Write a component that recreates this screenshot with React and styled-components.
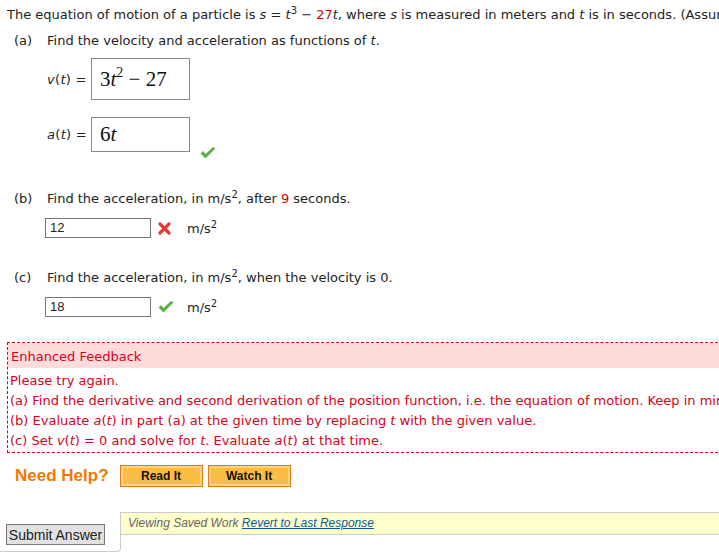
import styled, { createGlobalStyle } from "styled-components";

const Global = createGlobalStyle`
  html, body { margin: 0; padding: 0; background: #fff; }
  body { font-family: "DejaVu Sans", Verdana, sans-serif; font-size: 13px; color: #222; overflow: hidden; }
`;

const Page = styled.div`
  width: 719px;
  height: 554px;
  overflow: hidden;
  padding: 0 0 0 7px;
  box-sizing: border-box;
`;

const Intro = styled.div`
  white-space: nowrap;
  line-height: 16px;
  padding-top: 7px;
`;

const V = styled.i`
  font-style: italic;
`;

const Red = styled.span`
  color: #d50000;
`;

const Sup = styled.sup`
  font-size: 10px;
  line-height: 0;
  vertical-align: 5px;
`;

const Part = styled.div`
  margin-top: ${(p) => p.$top || 0}px;
  padding-left: 7px;
  display: flex;
  white-space: nowrap;
  line-height: 16px;
`;

const Letter = styled.span`
  width: 33px;
`;

const Body = styled.div`
  padding-left: 40px;
`;

const MathRow = styled.div`
  display: flex;
  align-items: center;
  margin-top: ${(p) => p.$top}px;
`;

const MathLabel = styled.span`
  width: 44px;
  flex-shrink: 0;
  white-space: nowrap;
  letter-spacing: 0.3px;
  color: #222;
`;

const MathBox = styled.div`
  width: 99px;
  height: ${(p) => p.$h}px;
  border: 1px solid #888;
  box-sizing: border-box;
  display: flex;
  align-items: center;
  padding-left: 8px;
  font-family: "Liberation Serif", "Times New Roman", serif;
  font-size: 21px;
  color: #111;
`;

const Sup2 = styled.sup`
  font-size: 14px;
  line-height: 0;
  vertical-align: 9px;
`;

const AnsRow = styled.div`
  display: flex;
  align-items: center;
  margin-top: ${(p) => p.$top}px;
  padding-left: 38px;
`;

const Input = styled.div`
  width: 106px;
  height: 20px;
  border: 1px solid #767676;
  box-sizing: border-box;
  font-family: "Liberation Sans", Arial, sans-serif;
  font-size: 13px;
  line-height: 18px;
  padding-left: 4px;
  color: #222;
`;

const Mark = styled.span`
  display: inline-flex;
  width: 16px;
  margin-left: ${(p) => p.$ml}px;
`;

const CheckMark = styled(Mark)`
  align-self: flex-end;
  margin-bottom: -7px;
`;

const Unit = styled.span`
  margin-left: ${(p) => p.$ml}px;
`;

const Feedback = styled.div`
  margin-top: 25px;
  border: 1px dashed #e00000;
  border-right: none;
  color: #d80020;
  line-height: 20px;
  width: 740px;
  padding-bottom: 1px;
`;

const FeedHead = styled.div`
  background: #ffdcdc;
  height: 25px;
  line-height: 27px;
  padding-left: 3px;
  margin-bottom: 3px;
`;

const FeedLine = styled.div`
  padding-left: 2px;
  white-space: nowrap;
`;

const HelpRow = styled.div`
  display: flex;
  align-items: center;
  margin-top: 12px;
  padding-left: 8px;
  gap: 5px;
`;

const HelpTitle = styled.span`
  font-family: "Liberation Sans", Arial, sans-serif;
  font-weight: bold;
  font-size: 17px;
  color: #f07800;
  margin-right: 6px;
`;

const HelpButton = styled.button`
  width: 83px;
  height: 22px;
  padding: 0;
  background: #fbbd45;
  border: 1px solid #e07a10;
  box-shadow: inset 0 0 0 2px #fdd38a;
  font-family: "Liberation Sans", Arial, sans-serif;
  font-weight: bold;
  font-size: 12px;
  color: #111;
`;

const Bottom = styled.div`
  display: flex;
  margin-top: 25px;
  margin-left: -7px;
`;

const SubmitPanel = styled.div`
  width: 121px;
  height: 40px;
  border-right: 1px solid #ccc;
  border-bottom: 1px solid #ccc;
  border-bottom-right-radius: 4px;
  box-sizing: border-box;
  display: flex;
  align-items: flex-end;
  padding: 0 0 6px 6px;
`;

const SubmitButton = styled.button`
  width: 99px;
  height: 21px;
  padding: 0;
  background: #e1e1e1;
  border: 1px solid #777;
  font-family: "Liberation Sans", Arial, sans-serif;
  font-size: 14px;
  color: #222;
`;

const Saved = styled.div`
  flex: 1;
  height: 23px;
  background: #ffffcc;
  border-top: 1px solid #ccc;
  border-bottom: 1px solid #ccc;
  box-sizing: border-box;
  font-family: "Liberation Sans", Arial, sans-serif;
  font-style: italic;
  font-size: 12px;
  color: #666;
  line-height: 21px;
  padding-left: 7px;
`;

const Link = styled.a`
  color: #0a5aa0;
  text-decoration: underline;
`;

const Check = () => (
  <svg width="16" height="12" viewBox="0 0 16 12">
    <path d="M1 6.5 L5.5 11 L15 1.5 L13 0.5 L5.5 7.5 L3 4.5 Z" fill="#5bb240" stroke="#3f8f2a" strokeWidth="0.6" />
  </svg>
);

const Cross = () => (
  <svg width="13" height="13" viewBox="0 0 13 13">
    <path d="M2 2 L11 11 M11 2 L2 11" stroke="#e33b3b" strokeWidth="3.2" strokeLinecap="round" />
  </svg>
);

export default function App() {
  return (
    <Page>
      <Global />
      <Intro>
        The equation of motion of a particle is <V>s</V> = <V>t</V><Sup>3</Sup> − <Red>27</Red><V>t</V>, where <V>s</V> is measured in meters and <V>t</V> is in seconds. (Assume <V>t</V> ≥ 0.)
      </Intro>

      <Part $top={10}>
        <Letter>(a)</Letter>
        <span>Find the velocity and acceleration as functions of <V>t</V>.</span>
      </Part>
      <Body>
        <MathRow $top={9}>
          <MathLabel><V>v</V>(<V>t</V>) =</MathLabel>
          <MathBox $h={42}>
            <span>3<V>t</V><Sup2>2</Sup2> − 27</span>
          </MathBox>
        </MathRow>
        <MathRow $top={17}>
          <MathLabel><V>a</V>(<V>t</V>) =</MathLabel>
          <MathBox $h={35}>
            <span>6<V>t</V></span>
          </MathBox>
          <CheckMark $ml={10}><Check /></CheckMark>
        </MathRow>
      </Body>

      <Part $top={39}>
        <Letter>(b)</Letter>
        <span>Find the acceleration, in m/s<Sup>2</Sup>, after <Red>9</Red> seconds.</span>
      </Part>
      <AnsRow $top={11}>
        <Input>12</Input>
        <Mark $ml={7}><Cross /></Mark>
        <Unit $ml={13}>m/s<Sup>2</Sup></Unit>
      </AnsRow>

      <Part $top={32}>
        <Letter>(c)</Letter>
        <span>Find the acceleration, in m/s<Sup>2</Sup>, when the velocity is 0.</span>
      </Part>
      <AnsRow $top={11}>
        <Input>18</Input>
        <Mark $ml={7}><Check /></Mark>
        <Unit $ml={13}>m/s<Sup>2</Sup></Unit>
      </AnsRow>

      <Feedback>
        <FeedHead>Enhanced Feedback</FeedHead>
        <FeedLine>Please try again.</FeedLine>
        <FeedLine>(a) Find the derivative and second derivation of the position function, i.e. the equation of motion. Keep in mind</FeedLine>
        <FeedLine>(b) Evaluate <V>a</V>(<V>t</V>) in part (a) at the given time by replacing <V>t</V> with the given value.</FeedLine>
        <FeedLine>(c) Set <V>v</V>(<V>t</V>) = 0 and solve for <V>t</V>. Evaluate <V>a</V>(<V>t</V>) at that time.</FeedLine>
      </Feedback>

      <HelpRow>
        <HelpTitle>Need Help?</HelpTitle>
        <HelpButton>Read It</HelpButton>
        <HelpButton>Watch It</HelpButton>
      </HelpRow>

      <Bottom>
        <SubmitPanel>
          <SubmitButton>Submit Answer</SubmitButton>
        </SubmitPanel>
        <Saved>
          Viewing Saved Work <Link>Revert to Last Response</Link>
        </Saved>
      </Bottom>
    </Page>
  );
}
